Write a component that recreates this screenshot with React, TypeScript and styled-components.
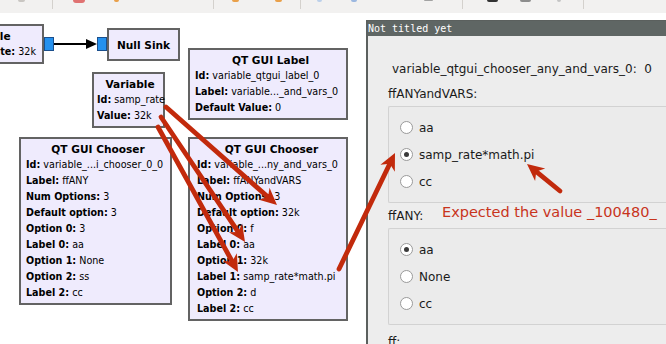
import React from 'react'
import styled, { createGlobalStyle } from 'styled-components'

const GlobalStyle = createGlobalStyle`
  html, body {
    margin: 0;
    padding: 0;
    background: #fff;
    overflow: hidden;
  }
  body {
    font-family: "DejaVu Sans", "Liberation Sans", sans-serif;
  }
`

const Page = styled.div`
  position: relative;
  width: 666px;
  height: 344px;
  overflow: hidden;
  display: flex;
  flex-direction: column;
  background: #fff;
`

const Toolbar = styled.div`
  flex: none;
  height: 13px;
  display: flex;
  background: #f2f1f0;
`

const ToolGroup = styled.div<{ $w: number }>`
  flex: none;
  width: ${({ $w }) => $w}px;
  display: flex;
  align-items: flex-start;
`

const Separator = styled.div`
  flex: none;
  width: 1px;
  height: 9px;
  background: #d4d1cd;
`

const ToolStub = styled.div<{ $at: number; $w: number; $h: number; $color: string }>`
  flex: none;
  margin-left: ${({ $at }) => $at}px;
  width: ${({ $w }) => $w}px;
  height: ${({ $h }) => $h}px;
  background: ${({ $color }) => $color};
  border-radius: 0 0 ${({ $w }) => $w / 2}px ${({ $w }) => $w / 2}px;
`

const Canvas = styled.div`
  position: relative;
  flex: 1;
  background: #fff;
`

const Block = styled.div<{ $x: number; $y: number; $w: number; $pad: number; $padR?: number; $h?: number }>`
  position: absolute;
  left: ${({ $x }) => $x}px;
  top: ${({ $y }) => $y}px;
  width: ${({ $w }) => $w}px;
  ${({ $h }) => ($h ? `height: ${$h}px; display: flex; flex-direction: column; justify-content: center;` : '')}
  box-sizing: border-box;
  padding: 2px ${({ $padR }) => $padR ?? 0}px 2px ${({ $pad }) => $pad}px;
  background: #efebfd;
  border: 2px solid #636363;
  color: #000;
`

const BlockTitle = styled.div`
  font-size: 10.6px;
  font-weight: bold;
  line-height: 16px;
  text-align: center;
  white-space: nowrap;
`

const Param = styled.div`
  font-size: 9.6px;
  line-height: 16px;
  white-space: nowrap;

  b {
    font-weight: bold;
  }
`

const Port = styled.div<{ $x: number; $y: number }>`
  position: absolute;
  left: ${({ $x }) => $x}px;
  top: ${({ $y }) => $y}px;
  width: 10px;
  height: 14px;
  box-sizing: border-box;
  background: #2591ee;
  border: 1px solid #1b4f8c;
`

const Wires = styled.svg`
  position: absolute;
  left: 0;
  top: 0;
  overflow: visible;
`

const Window = styled.div`
  position: absolute;
  left: 366px;
  top: 20px;
  width: 310px;
  height: 334px;
  display: flex;
  flex-direction: column;
  border-left: 2px solid #5b605e;
  border-top: 1px solid #5b605e;
  background: #ededed;
`

const TitleBar = styled.div`
  flex: none;
  height: 15px;
  background: #5f6664;
  color: #fff;
  font-family: "DejaVu Sans Mono", "Liberation Mono", monospace;
  font-size: 10px;
  line-height: 15px;
`

const WindowBody = styled.div`
  display: flex;
  flex-direction: column;
  padding: 25px 0 0 20px;
  font-size: 12px;
  color: #1a1a1a;
`

const ValueLine = styled.div`
  line-height: 16px;
  padding-left: 4px;
  margin-bottom: 9px;
  white-space: nowrap;
`

const GroupLabel = styled.div<{ $gap: number }>`
  line-height: 16px;
  margin-top: ${({ $gap }) => $gap}px;
  margin-bottom: 4px;
`

const Group = styled.div`
  display: flex;
  flex-direction: column;
  padding: 7px 0;
  background: #ebebeb;
  border: 1px solid #d2d2d2;
  border-right: none;
  border-radius: 2px 0 0 2px;
`

const Option = styled.div`
  height: 27px;
  display: flex;
  align-items: center;
  gap: 6px;
  padding-left: 11px;
  white-space: nowrap;
`

const Radio = styled.span<{ $on: boolean }>`
  flex: none;
  width: 13px;
  height: 13px;
  box-sizing: border-box;
  border-radius: 50%;
  border: 1px solid #9a9a9a;
  background: #fff;
  display: flex;
  align-items: center;
  justify-content: center;

  &::after {
    content: '';
    display: ${({ $on }) => ($on ? 'block' : 'none')};
    width: 5px;
    height: 5px;
    border-radius: 50%;
    background: #3a3a3a;
  }
`

const Note = styled.div`
  position: absolute;
  left: 442px;
  top: 202px;
  font-size: 14.5px;
  line-height: 20px;
  color: #c8341c;
  white-space: nowrap;
`

const Overlay = styled.svg`
  position: absolute;
  left: 0;
  top: 0;
  pointer-events: none;
`

type Row = [string, string]

type BlockData = { title: string; x: number; y: number; w: number; pad: number; padR?: number; h?: number; rows: Row[] }

const blocks: BlockData[] = [
  { title: 'Throttle', x: -64, y: 11, w: 108, pad: 5, padR: 12, rows: [['Sample Rate:', '32k']] },
  { title: 'Null Sink', x: 107, y: 15, w: 73, pad: 0, h: 33, rows: [] },
  {
    title: 'QT GUI Label', x: 188, y: 35, w: 160, pad: 5,
    rows: [['Id:', 'variable_qtgui_label_0'], ['Label:', 'variable..._and_vars_0'], ['Default Value:', '0']],
  },
  { title: 'Variable', x: 92, y: 59, w: 73, pad: 3, rows: [['Id:', 'samp_rate'], ['Value:', '32k']] },
  {
    title: 'QT GUI Chooser', x: 19, y: 124, w: 153, pad: 5,
    rows: [
      ['Id:', 'variable_...i_chooser_0_0'], ['Label:', 'ffANY'], ['Num Options:', '3'],
      ['Default option:', '3'], ['Option 0:', '3'], ['Label 0:', 'aa'], ['Option 1:', 'None'],
      ['Option 2:', 'ss'], ['Label 2:', 'cc'],
    ],
  },
  {
    title: 'QT GUI Chooser', x: 188, y: 124, w: 160, pad: 7,
    rows: [
      ['Id:', 'variable_...ny_and_vars_0'], ['Label:', 'ffANYandVARS'], ['Num Options:', '3'],
      ['Default option:', '32k'], ['Option 0:', 'f'], ['Label 0:', 'aa'], ['Option 1:', '32k'],
      ['Label 1:', 'samp_rate*math.pi'], ['Option 2:', 'd'], ['Label 2:', 'cc'],
    ],
  },
]

const choosers = [
  { label: 'ffANYandVARS:', gap: 0, options: ['aa', 'samp_rate*math.pi', 'cc'], selected: 1 },
  { label: 'ffANY:', gap: 5, options: ['aa', 'None', 'cc'], selected: 0 },
]

const toolGroups = [
  { w: 52, stubs: [{ at: 18, w: 7, h: 2, color: '#c9c6c2' }] },
  { w: 161, stubs: [{ at: 20, w: 12, h: 3, color: '#e07272' }, { at: 29, w: 5, h: 2, color: '#e9a04a' }] },
  { w: 87, stubs: [{ at: 18, w: 7, h: 2, color: '#e9a04a' }, { at: 36, w: 7, h: 2, color: '#e9a04a' }] },
  { w: 162, stubs: [{ at: 16, w: 5, h: 2, color: '#bcd0ea' }, { at: 29, w: 6, h: 2, color: '#9cb8e0' }, { at: 67, w: 9, h: 1, color: '#a3a3a3' }] },
  { w: 121, stubs: [{ at: 24, w: 11, h: 2, color: '#333' }, { at: 22, w: 11, h: 2, color: '#8d8d8d' }, { at: 26, w: 4, h: 2, color: '#c4c4c4' }] },
  { w: 79, stubs: [] },
]

const RED = '#c22a0c'

const arrows = [
  [166, 107, 277, 205],
  [161, 117, 245, 242],
  [158, 127, 238, 272],
  [339, 269, 395, 153],
  [560, 191, 527, 164],
]

function headPoints(x1: number, y1: number, x2: number, y2: number) {
  const dx = x2 - x1
  const dy = y2 - y1
  const len = Math.hypot(dx, dy)
  const ux = dx / len
  const uy = dy / len
  const bx = x2 - ux * 17
  const by = y2 - uy * 17
  const nx = x2 - ux * 12
  const ny = y2 - uy * 12
  const px = -uy * 8
  const py = ux * 8
  return `${x2},${y2} ${bx + px},${by + py} ${nx},${ny} ${bx - px},${by - py}`
}

export default function App() {
  return (
    <Page>
      <GlobalStyle />
      <Toolbar>
        {toolGroups.map((group, i) => (
          <React.Fragment key={i}>
            {i > 0 && <Separator />}
            <ToolGroup $w={group.w - (i > 0 ? 1 : 0)}>
              {group.stubs.map((s, j) => (
                <ToolStub key={j} $at={s.at} $w={s.w} $h={s.h} $color={s.color} />
              ))}
            </ToolGroup>
          </React.Fragment>
        ))}
      </Toolbar>

      <Canvas>
        <Wires width="666" height="331">
          <line x1="54" y1="31" x2="89" y2="31" stroke="#000" strokeWidth="2" />
          <polygon points="97,31 86,26 86,36" fill="#000" />
        </Wires>
        {blocks.map((b, i) => (
          <Block key={i} $x={b.x} $y={b.y} $w={b.w} $pad={b.pad} $padR={b.padR} $h={b.h}>
            <BlockTitle>{b.title}</BlockTitle>
            {b.rows.map(([k, v]) => (
              <Param key={k}>
                <b>{k}</b> {v}
              </Param>
            ))}
          </Block>
        ))}
        <Port $x={44} $y={24} />
        <Port $x={97} $y={24} />
      </Canvas>

      <Window>
        <TitleBar>Not titled yet</TitleBar>
        <WindowBody>
          <ValueLine>variable_qtgui_chooser_any_and_vars_0:&nbsp; 0</ValueLine>
          {choosers.map((c) => (
            <React.Fragment key={c.label}>
              <GroupLabel $gap={c.gap}>{c.label}</GroupLabel>
              <Group>
                {c.options.map((o, i) => (
                  <Option key={o}>
                    <Radio $on={i === c.selected} />
                    {o}
                  </Option>
                ))}
              </Group>
            </React.Fragment>
          ))}
          <GroupLabel $gap={9}>ff:</GroupLabel>
        </WindowBody>
      </Window>

      <Note>Expected the value _100480_</Note>

      <Overlay width="666" height="344">
        {arrows.map(([x1, y1, x2, y2], i) => {
          const len = Math.hypot(x2 - x1, y2 - y1)
          const ex = x2 - ((x2 - x1) / len) * 12
          const ey = y2 - ((y2 - y1) / len) * 12
          return (
            <g key={i}>
              <line x1={x1} y1={y1} x2={ex} y2={ey} stroke={RED} strokeWidth="4.8" strokeLinecap="round" />
              <polygon points={headPoints(x1, y1, x2, y2)} fill={RED} />
            </g>
          )
        })}
      </Overlay>
    </Page>
  )
}
